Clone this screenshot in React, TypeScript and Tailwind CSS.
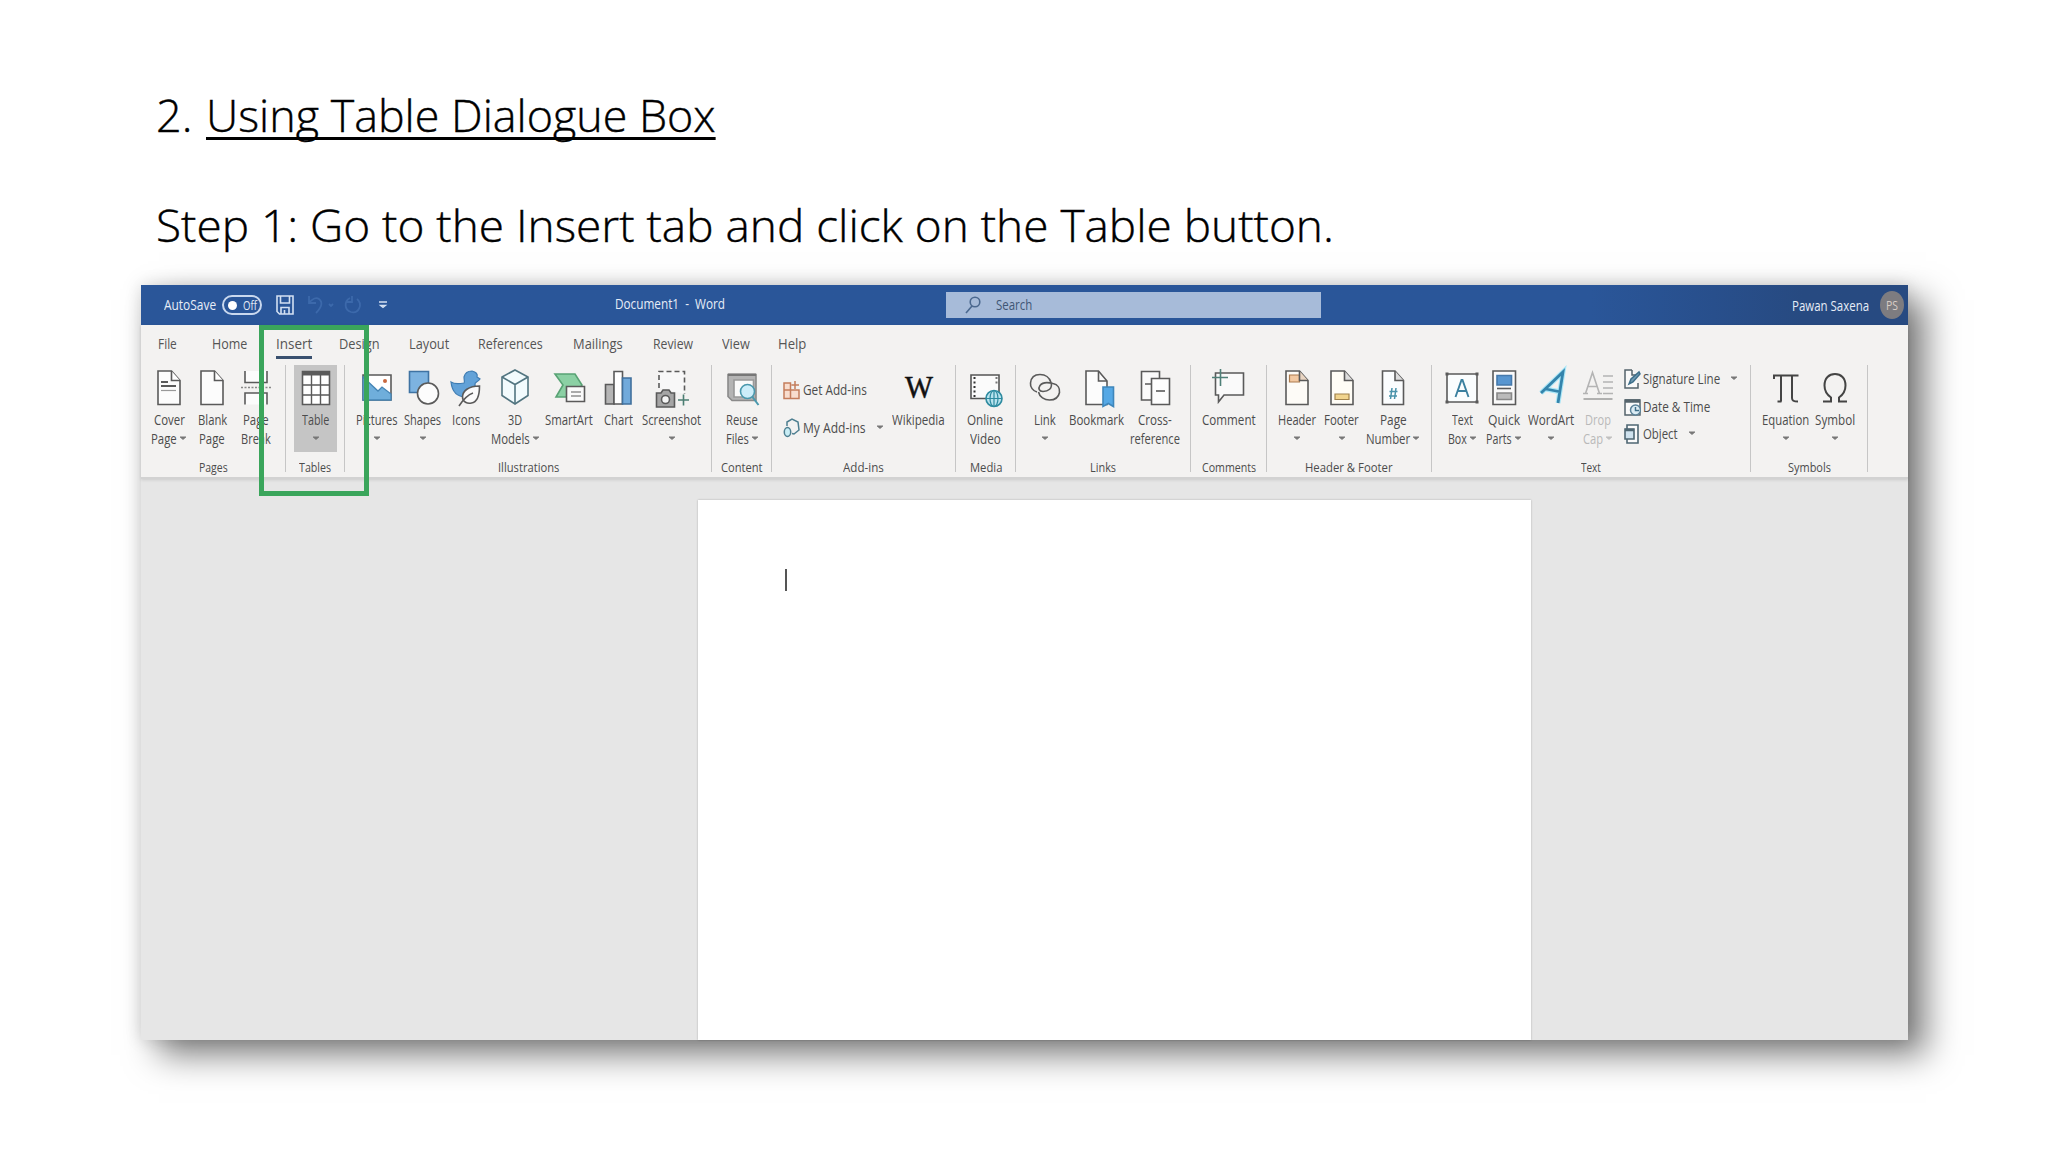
import { useLayoutEffect, useRef, useState, type ReactNode } from "react";
import clsx from "clsx";

// Squeezes one line of text horizontally so that it fills exactly `width` pixels
function FitText({ width, className, children }: { width: number; className?: string; children: string }) {
    const ref = useRef<HTMLSpanElement>(null);
    const [scale, setScale] = useState(1);

    useLayoutEffect(() => {
        if (ref.current) setScale(width / ref.current.offsetWidth);
    }, [width, children]);

    return (
        <span className="block shrink-0" style={{ width }}>
            <span
                ref={ref}
                className={clsx("block w-max origin-left whitespace-pre", className)}
                style={{ transform: `scaleX(${scale})` }}
            >
                {children}
            </span>
        </span>
    );
}

function Chevron({ className }: { className?: string }) {
    return (
        <svg viewBox="0 0 8 5" className={clsx("h-[5px] w-2 shrink-0", className)} fill="none">
            <path d="M1.200 1L4 3.400 6.800 1z" fill="#777" stroke="#777" strokeWidth="1" />
        </svg>
    );
}

const ink = "#5a5a5a";

function Icon({ children }: { children: ReactNode }) {
    return (
        <svg
            viewBox="0 0 34 40"
            className="mt-[3px] h-10 w-[34px] shrink-0 overflow-visible"
            fill="none"
            stroke={ink}
            strokeWidth="1.6"
        >
            {children}
        </svg>
    );
}

const SheetPath = () => (
    <>
        <path d="M6 3h13.5l8.500 9.500V36.500H6z" fill="#fcfcfc" />
        <path d="M19.500 3v9.500h8.500" fill="#fff" />
    </>
);

const icons: Record<string, ReactNode> = {
    cover: (
        <Icon>
            <SheetPath />
            <path d="M9 14h7M9 18h15" strokeWidth="2" />
            <path d="M9 22.500h15" stroke="#999" strokeWidth="1.200" />
        </Icon>
    ),
    blank: (
        <Icon>
            <SheetPath />
        </Icon>
    ),
    pageBreak: (
        <Icon>
            <path d="M6 3v11.500h22V3M6 36.500V25h22v11.500" fill="#fcfcfc" />
            <path d="M2 19.500h31" stroke="#888" strokeDasharray="2 1.500" />
        </Icon>
    ),
    table: (
        <Icon>
            <path d="M3.500 3.500h27v33h-27z" fill="#fff" />
            <path d="M3.500 5.500h27" strokeWidth="4" />
            <path d="M3.500 17h27M3.500 27h27M12.500 7v29.500M21.500 7v29.500" strokeWidth="1.400" />
        </Icon>
    ),
    pictures: (
        <Icon>
            <path d="M3 7h28v25H3z" fill="#fff" />
            <path d="M3 9l15 14 4-4 9 7v6H3z" fill="#6faedb" stroke="#4585b5" strokeWidth="1.300" />
            <circle cx="25" cy="13" r="2" fill="#c9683f" stroke="none" />
        </Icon>
    ),
    shapes: (
        <Icon>
            <path d="M3.500 3.500h19v21h-19z" fill="#7db3e0" stroke="#3f73a3" />
            <circle cx="22" cy="25.500" r="10.500" fill="#fcfcfc" />
        </Icon>
    ),
    icons: (
        <Icon>
            <path
                d="M2 14c3 2 8 2 13 1 1-1 0-3 0-6 1-4 4-6 8-6 4 1 6 3 5 6l3 2c-2 3-5 3-5 5 1 6-3 12-9 13C8 29 3 23 2 14z"
                fill="#62a2d8"
                stroke="#3f7db3"
                strokeWidth="1.200"
            />
            <path d="M30.500 18c-11 0-17 5-17 11 0 5 5 7 9 6 6-1 8-8 8-17z" fill="#fbfbfb" />
            <path d="M10 38c4-6 8-11 14-13" />
        </Icon>
    ),
    cube: (
        <Icon>
            <path d="M17 2l13 7v18.500L17 36 4 27.500V9z" fill="#f2fbfd" stroke="#527580" />
            <path d="M4 9l13 7.500L30 9M17 16.500V36" stroke="#527580" />
        </Icon>
    ),
    smartArt: (
        <Icon>
            <path d="M3 6h20l7 11-7 12H4l7-12z" fill="#8bd0a4" stroke="#58a274" />
            <path d="M14.500 18.500h18v15h-18z" fill="#fafafa" />
            <path d="M19 24h10M19 28h10" strokeWidth="1.200" />
        </Icon>
    ),
    chart: (
        <Icon>
            <path d="M4.500 16.500h8.500v19.500H4.500z" fill="#b5b5b5" />
            <path d="M13 3.500h8.500V36H13z" fill="#fff" />
            <path d="M21.500 10h8.500v26h-8.500z" fill="#71aadb" stroke="#40709d" />
        </Icon>
    ),
    screenshot: (
        <Icon>
            <path d="M4 20V3.500h25.500V26" strokeDasharray="5 3" fill="#f8f8f8" />
            <path d="M1.500 25h4.500l2-3h6l2 3h3.500v14h-18z" fill="#a5a5a5" />
            <circle cx="10.500" cy="31.500" r="4" fill="#f4f4f4" />
            <path d="M23 32h11M28.500 26.500v11" stroke="#4b7d72" />
        </Icon>
    ),
    reuse: (
        <Icon>
            <path d="M3 6.500h28v26H7l-4-4z" fill="#b4b4b4" stroke="#8a8a8a" />
            <path d="M3 5.500h28v2.500H3z" fill="#777" stroke="none" />
            <path d="M9 12h19.500v17H9z" fill="#fafafa" stroke="#999" />
            <circle cx="22.500" cy="23.500" r="7" fill="#cdeefa" stroke="#4a98ad" />
            <path d="M27.500 29l6 8" stroke="#4a98ad" strokeWidth="2" />
        </Icon>
    ),
    wikipedia: (
        <Icon>
            <text
                x="3"
                y="30"
                textLength="28"
                lengthAdjust="spacingAndGlyphs"
                fill="#111"
                stroke="#111"
                strokeWidth="0.500"
                fontFamily="Liberation Serif, serif"
                fontSize="32"
            >
                W
            </text>
        </Icon>
    ),
    video: (
        <Icon>
            <path d="M3 7h28v23.500H3z" fill="#fbfbfb" stroke="#555" />
            <path d="M6.500 9v20" stroke="#333" strokeWidth="2" strokeDasharray="2 2.500" />
            <path d="M28.500 9v8" stroke="#777" strokeWidth="2" strokeDasharray="2 2.500" />
            <circle cx="26" cy="30.500" r="8" fill="#b9e3ee" stroke="#2e8ba0" />
            <path d="M18 30.500h16M26 22.500v16" stroke="#2e8ba0" strokeWidth="1.200" />
            <ellipse cx="26" cy="30.500" rx="4" ry="8" stroke="#2e8ba0" strokeWidth="1.200" />
        </Icon>
    ),
    link: (
        <Icon>
            <path d="M9 24c-4-1-7-5-6.500-9C3 10 6 6.500 12 6.500c6 0 9 2 11 8s-3 9-8 9c-4 0-5-3-3-6 3-4 9-3 13-2 5 1 7 5 6.500 9-1 5-4 7.500-10 7.500-5 0-10-3-11-8" />
        </Icon>
    ),
    bookmark: (
        <Icon>
            <path d="M6 3h12.500l8.500 10V36.500H6z" fill="#fcfcfc" />
            <path d="M18.500 3v10h8.500" />
            <path d="M23 19h10.500v19.500l-5.200-3-5.300 3z" fill="#55a8e5" stroke="#3e86bb" />
        </Icon>
    ),
    crossRef: (
        <Icon>
            <path d="M3.500 3.500h18v28.500h-18zM7 16h6" fill="#fafafa" />
            <path d="M13.500 10.500h18v26h-18z" fill="#fdfdfd" />
            <path d="M18 23h9" />
        </Icon>
    ),
    comment: (
        <Icon>
            <path d="M3.500 5h28v22H12l-5.500 7v-7h-3z" fill="#fafafa" />
            <path d="M0 9.500h16M8.500 1v17" stroke="#4f8078" />
        </Icon>
    ),
    header: (
        <Icon>
            <path d="M6 3h13.500l8.500 9.500V36.500H6z" fill="#fdfbf7" />
            <path d="M9.500 7h10v7h-10z" fill="#f3c9a2" stroke="#ab7b4e" strokeWidth="1.200" />
            <path d="M19.500 3v9.500h8.500" fill="#e9d5c2" />
        </Icon>
    ),
    footer: (
        <Icon>
            <path d="M6 3h13.500l8.500 9.500V36.500H6z" fill="#fffdf6" />
            <path d="M19.500 3v9.500h8.500" fill="#ddd" />
            <path d="M10 26h14v5.500H10z" fill="#f1d48d" stroke="#a1824a" strokeWidth="1.200" />
        </Icon>
    ),
    pageNumber: (
        <Icon>
            <path d="M6.500 3h12.500l8.500 9.500V36.500h-21z" fill="#fbfdfe" />
            <path d="M19 3v9.500h8.500" fill="#ddd" />
            <path d="M16 20l-1.500 11M20 20l-1.500 11M13.500 23.500h8M13 28h8" stroke="#4a93ab" strokeWidth="1.500" />
        </Icon>
    ),
    textBox: (
        <Icon>
            <path d="M2 6h30v28H2z" fill="#fafdfe" />
            <path d="M10.500 29l6-17h1l6 17M12.500 23h9" stroke="#3b809f" strokeWidth="1.900" />
            <path d="M.5 4.500h3v3h-3zM30.500 4.500h3v3h-3zM.5 32.500h3v3h-3zM30.500 32.500h3v3h-3z" fill={ink} stroke="none" />
        </Icon>
    ),
    quickParts: (
        <Icon>
            <path d="M6 3h22.500v33.500H6z" fill="#fafafa" />
            <path d="M10 7.500h14.500v9.500H10z" fill="#5896d0" stroke="#4579ab" />
            <path d="M10 20.500h14" />
            <path d="M10 25h14.500v6.500H10z" fill="#bbb" stroke="#888" />
        </Icon>
    ),
    wordArt: (
        <Icon>
            <path d="M7 25L29 4l-5 31M12 21l15 3" stroke="#a9e6f7" strokeWidth="5" />
            <path d="M7 25L29 4l-5 31M12 21l15 3" stroke="#3484ac" strokeWidth="2.800" />
        </Icon>
    ),
    dropCap: (
        <Icon>
            <path d="M4.500 25.500l7-21 7 21M7 18.500h9M2 25.500h5M16 25.500h5M22 8h10M22 14h10M22 20h10M22 25.500h10" stroke="#b4b4b4" />
            <path d="M2.500 31h29" stroke="#a0a0a0" />
        </Icon>
    ),
    pi: (
        <Icon>
            <path d="M5 11V7.500h24.500M12 8v25.500M8.500 33.500h4M23 8v22c0 3 2 3.500 6 3.500" stroke="#444" strokeWidth="2" />
        </Icon>
    ),
    omega: (
        <Icon>
            <path d="M5 33.500h8v-4C8 26 6.500 22 6.500 17.500 6.500 10 11 6 17 6s10.500 4 10.500 11.500c0 4.500-1.500 8.500-6.500 12v4h8" stroke="#444" strokeWidth="2" />
        </Icon>
    ),
};

interface Line {
    text: string;
    width: number;
    arrow?: boolean;
}

interface RibbonButtonProps {
    icon: string;
    lines: Line[];
    className: string;
    arrow?: boolean;
    disabled?: boolean;
}

function RibbonButton({ icon, lines, className, arrow, disabled }: RibbonButtonProps) {
    return (
        <div
            className={clsx(
                "flex shrink-0 flex-col items-center",
                disabled ? "text-[#b9b9b9]" : "text-[#4c4c4c]",
                className
            )}
        >
            {icons[icon]}
            <div className="mt-[2px] flex flex-col items-center">
                {lines.map((line) => (
                    <div key={line.text} className="flex h-[19px] items-center gap-[2px]">
                        <FitText width={line.width} className="text-sm leading-[19px]">
                            {line.text}
                        </FitText>
                        {line.arrow && <Chevron className={disabled ? "opacity-40" : ""} />}
                    </div>
                ))}
                {arrow && <Chevron className="mt-[7px]" />}
            </div>
        </div>
    );
}

function Group({ label, labelWidth, className, children }: { label: string; labelWidth: number; className: string; children: ReactNode }) {
    return (
        <div className={clsx("flex h-[107px] shrink-0 flex-col items-center border-r border-[#c6c6c6]", className)}>
            <div className="flex h-[94px] w-full shrink-0 items-start">{children}</div>
            <FitText width={labelWidth} className="text-[13px] leading-[17px] text-[#4c4c4c]">
                {label}
            </FitText>
        </div>
    );
}

const tabs = [
    { name: "File", width: 19, className: "ml-[17px]" },
    { name: "Home", width: 35, className: "ml-[35px]" },
    { name: "Insert", width: 36, className: "ml-[29px]" },
    { name: "Design", width: 41, className: "ml-[27px]" },
    { name: "Layout", width: 40, className: "ml-[29px]" },
    { name: "References", width: 65, className: "ml-[29px]" },
    { name: "Mailings", width: 50, className: "ml-[30px]" },
    { name: "Review", width: 40, className: "ml-[30px]" },
    { name: "View", width: 28, className: "ml-[29px]" },
    { name: "Help", width: 28, className: "ml-7" },
];

function TitleBar() {
    return (
        <div className="flex h-10 items-center bg-linear-to-r from-[#2a5699] from-82% via-[#284f8c] via-89% to-[#274a81] to-94% pl-[23px] text-[#e6edf7]">
            <FitText width={52} className="text-sm leading-5">AutoSave</FitText>
            <div className="ml-[6px] flex h-5 w-10 items-center gap-[6px] rounded-full border-2 border-[#c9d8ee] pl-1">
                <div className="size-[9px] rounded-full bg-white" />
                <FitText width={14} className="text-[13px] leading-4">Off</FitText>
            </div>
            <svg viewBox="0 0 18 20" className="ml-[14px] h-5 w-[18px]" fill="none" stroke="#d3e0f2" strokeWidth="1.600">
                <path d="M1 1h16v18H3.500L1 16.500zM4.500 1v7h9V1M5 19v-6.500h8V19M8.500 15v4" />
            </svg>
            <svg viewBox="0 0 60 22" className="ml-3 h-[22px] w-[60px]" fill="none" stroke="#3c69ab" strokeWidth="1.800">
                <path d="M3 2v7h7M3 9c3-4 7-6 10-4 4 3 3 8-3 14M23 10l2 2 2-2M44 4c-6 3-6 12 1 14 8 2 12-8 6-13M46 2v6h-6" />
            </svg>
            <svg viewBox="0 0 10 8" className="ml-3 h-2 w-[10px]" fill="none" stroke="#d3e0f2" strokeWidth="1.300">
                <path d="M1 1h8M2.500 4.500L5 6.500l2.500-2z" />
            </svg>
            <div className="mb-[2px] ml-[227px]">
                <FitText width={110} className="text-sm leading-5">Document1  -  Word</FitText>
            </div>
            <div className="ml-[221px] flex h-[26px] w-[375px] items-center gap-[15px] bg-[#a7bbd9] pl-[19px] text-[#3f5675]">
                <svg viewBox="0 0 16 18" className="h-[18px] w-4" fill="none" stroke="#4b688f" strokeWidth="1.600">
                    <circle cx="10" cy="6" r="4.800" />
                    <path d="M7 10l-6 7" />
                </svg>
                <FitText width={36} className="text-sm leading-5">Search</FitText>
            </div>
            <div className="mt-[2px] ml-[471px]">
                <FitText width={77} className="text-sm leading-5">Pawan Saxena</FitText>
            </div>
            <div className="ml-[11px] flex h-7 w-6 items-center justify-center rounded-[50%] bg-[#7d7c80] text-[#d8ccc5]">
                <FitText width={12} className="text-[13px] leading-5">PS</FitText>
            </div>
        </div>
    );
}

function AddInsColumn() {
    return (
        <div className="ml-[11px] flex w-[101px] flex-col pt-[15px] text-[#4c4c4c]">
            <div className="flex h-[19px] items-center">
                <svg viewBox="0 0 17 20" className="mr-[3px] h-5 w-[17px]" fill="#f8ddce" stroke="#c47d5c" strokeWidth="1.500">
                    <path d="M1 3h6.500v7H1zM1 10h6.500v8.500H1zM7.500 10H16v8.500H7.500zM12 1v8M8.500 5H16" />
                </svg>
                <FitText width={64} className="text-sm leading-[19px]">Get Add-ins</FitText>
            </div>
            <div className="mt-[19px] flex h-[19px] items-center">
                <svg viewBox="0 0 17 20" className="mr-[3px] h-5 w-[17px]" fill="none" stroke="#4e7f90" strokeWidth="1.500">
                    <path d="M4 8V4l5-3 6 3 1 8-5 4-2-.5" />
                    <ellipse cx="4.500" cy="14" rx="3.200" ry="4.500" fill="#c8edf5" />
                </svg>
                <FitText width={63} className="text-sm leading-[19px]">My Add-ins</FitText>
                <Chevron className="ml-[10px]" />
            </div>
        </div>
    );
}

function TextColumn() {
    return (
        <div className="ml-[10px] flex flex-col gap-[9px] pt-1 text-[#4c4c4c]">
            <div className="flex h-[19px] items-center">
                <svg viewBox="0 0 17 20" className="mr-[2px] h-5 w-[17px]" fill="#fafafa" stroke="#55646c" strokeWidth="1.500">
                    <path d="M8 1H1v18h13v-5M8 1v5h4" />
                    <path d="M5 15l2-5 8-7 1 2-7 8z" fill="#6f9ab3" stroke="#3e6f8a" />
                </svg>
                <FitText width={77} className="text-sm leading-[19px]">Signature Line</FitText>
                <Chevron className="ml-[10px]" />
            </div>
            <div className="flex h-[19px] items-center">
                <svg viewBox="0 0 17 20" className="mr-[2px] h-5 w-[17px]" fill="#fafafa" stroke="#55646c" strokeWidth="1.500">
                    <path d="M1 3h15v15H1z" />
                    <path d="M1 4h15" strokeWidth="3.500" />
                    <circle cx="11.500" cy="13" r="5" fill="#dcecf4" stroke="#5c8298" />
                    <path d="M11.500 10v3.500H15" stroke="#3e6f8a" />
                </svg>
                <FitText width={67} className="text-sm leading-[19px]">Date & Time</FitText>
            </div>
            <div className="-mt-px flex h-[19px] items-center">
                <svg viewBox="0 0 17 20" className="mr-[2px] h-5 w-[17px]" fill="#fafafa" stroke="#4f6773" strokeWidth="1.600">
                    <path d="M3 5V1h11v18H3v-4" />
                    <path d="M1 5h9v10H1z" fill="#cfe2ee" />
                    <path d="M1 6h9" strokeWidth="2.500" />
                </svg>
                <FitText width={35} className="text-sm leading-[19px]">Object</FitText>
                <Chevron className="ml-[10px]" />
            </div>
        </div>
    );
}

function Ribbon() {
    return (
        <div className="flex h-[112px] items-start">
            <Group label="Pages" labelWidth={29} className="w-[145px]">
                <RibbonButton icon="cover" className="ml-[9px] w-[38px]" lines={[{ text: "Cover", width: 31 }, { text: "Page", width: 26, arrow: true }]} />
                <RibbonButton icon="blank" className="ml-[9px] w-[30px]" lines={[{ text: "Blank", width: 29 }, { text: "Page", width: 26 }]} />
                <RibbonButton icon="pageBreak" className="ml-[14px] w-[30px]" lines={[{ text: "Page", width: 26 }, { text: "Break", width: 30 }]} />
            </Group>
            <Group label="Tables" labelWidth={32} className="w-[59px]">
                <RibbonButton icon="table" className="ml-2 h-[87px] w-[43px] bg-[#c5c5c5]" arrow lines={[{ text: "Table", width: 27 }]} />
            </Group>
            <Group label="Illustrations" labelWidth={61} className="w-[367px]">
                <RibbonButton icon="pictures" className="ml-[11px] w-[42px]" arrow lines={[{ text: "Pictures", width: 42 }]} />
                <RibbonButton icon="shapes" className="ml-[6px] w-[37px]" arrow lines={[{ text: "Shapes", width: 37 }]} />
                <RibbonButton icon="icons" className="ml-[10px] w-[29px]" lines={[{ text: "Icons", width: 28 }]} />
                <RibbonButton icon="cube" className="ml-[10px] w-[50px]" lines={[{ text: "3D", width: 14 }, { text: "Models", width: 39, arrow: true }]} />
                <RibbonButton icon="smartArt" className="ml-[5px] w-12" lines={[{ text: "SmartArt", width: 48 }]} />
                <RibbonButton icon="chart" className="ml-[10px] w-[30px]" lines={[{ text: "Chart", width: 29 }]} />
                <RibbonButton icon="screenshot" className="ml-[9px] w-[59px]" arrow lines={[{ text: "Screenshot", width: 59 }]} />
            </Group>
            <Group label="Content" labelWidth={42} className="w-[60px]">
                <RibbonButton icon="reuse" className="ml-[13px] w-[34px]" lines={[{ text: "Reuse", width: 32 }, { text: "Files", width: 23, arrow: true }]} />
            </Group>
            <Group label="Add-ins" labelWidth={41} className="w-[184px]">
                <AddInsColumn />
                <RibbonButton icon="wikipedia" className="ml-2 w-[53px]" lines={[{ text: "Wikipedia", width: 53 }]} />
            </Group>
            <Group label="Media" labelWidth={32} className="w-[60px]">
                <RibbonButton icon="video" className="ml-[11px] w-9" lines={[{ text: "Online", width: 36 }, { text: "Video", width: 31 }]} />
            </Group>
            <Group label="Links" labelWidth={26} className="w-[175px]">
                <RibbonButton icon="link" className="ml-[14px] w-[30px]" arrow lines={[{ text: "Link", width: 22 }]} />
                <RibbonButton icon="bookmark" className="ml-[9px] w-[55px]" lines={[{ text: "Bookmark", width: 55 }]} />
                <RibbonButton icon="crossRef" className="ml-[6px] w-[50px]" lines={[{ text: "Cross-", width: 34 }, { text: "reference", width: 50 }]} />
            </Group>
            <Group label="Comments" labelWidth={54} className="w-[76px]">
                <RibbonButton icon="comment" className="ml-[11px] w-[54px]" lines={[{ text: "Comment", width: 54 }]} />
            </Group>
            <Group label="Header & Footer" labelWidth={88} className="w-[165px]">
                <RibbonButton icon="header" className="ml-[11px] w-[38px]" arrow lines={[{ text: "Header", width: 38 }]} />
                <RibbonButton icon="footer" className="ml-2 w-[35px]" arrow lines={[{ text: "Footer", width: 35 }]} />
                <RibbonButton icon="pageNumber" className="ml-[6px] w-14" lines={[{ text: "Page", width: 27 }, { text: "Number", width: 44, arrow: true }]} />
            </Group>
            <Group label="Text" labelWidth={20} className="w-[319px]">
                <RibbonButton icon="textBox" className="ml-[14px] w-8" lines={[{ text: "Text", width: 21 }, { text: "Box", width: 19, arrow: true }]} />
                <RibbonButton icon="quickParts" className="ml-[7px] w-[38px]" lines={[{ text: "Quick", width: 32 }, { text: "Parts", width: 26, arrow: true }]} />
                <RibbonButton icon="wordArt" className="ml-[5px] w-[46px]" arrow lines={[{ text: "WordArt", width: 46 }]} />
                <RibbonButton icon="dropCap" className="ml-2 w-8" disabled lines={[{ text: "Drop", width: 26 }, { text: "Cap", width: 20, arrow: true }]} />
                <TextColumn />
            </Group>
            <Group label="Symbols" labelWidth={43} className="w-[117px]">
                <RibbonButton icon="pi" className="ml-[11px] w-[47px]" arrow lines={[{ text: "Equation", width: 47 }]} />
                <RibbonButton icon="omega" className="ml-[6px] w-10" arrow lines={[{ text: "Symbol", width: 40 }]} />
            </Group>
        </div>
    );
}

export default function App() {
    return (
        <div className="h-[1152px] w-[2048px] overflow-hidden bg-white pt-[85px] font-['Open_Sans',sans-serif]">
            <div className="flex flex-col gap-[50px] pl-[156px] text-[45px] leading-[60px] font-light text-black [-webkit-text-stroke:0.4px_black]">
                <h1 className="flex gap-[14px]">
                    <FitText width={36}>2.</FitText>
                    <FitText width={510} className="underline decoration-[3px] underline-offset-[5px] [text-decoration-skip-ink:none]">
                        Using Table Dialogue Box
                    </FitText>
                </h1>
                <p>
                    <FitText width={1178}>Step 1: Go to the Insert tab and click on the Table button.</FitText>
                </p>
            </div>

            <div className="relative mt-[30px] ml-[141px] flex h-[755px] w-[1767px] flex-col bg-[#e6e6e6] shadow-[18px_15px_32px_rgba(0,0,0,0.5),0_0_16px_rgba(0,0,0,0.14)]">
                <TitleBar />
                <div className="border-b-2 border-[#d2d2d2] bg-[#f3f2f1] shadow-[0_1px_3px_rgba(0,0,0,0.12)]">
                    <div className="flex h-10 items-start pt-2 text-[#555]">
                        {tabs.map((tab) => (
                            <div key={tab.name} className={tab.className}>
                                <FitText width={tab.width} className="text-[15px] leading-5">{tab.name}</FitText>
                                {tab.name === "Insert" && <div className="mt-[3px] h-[3px] bg-[#39506f]" />}
                            </div>
                        ))}
                    </div>
                    <Ribbon />
                </div>
                <div className="mt-[21px] ml-[557px] w-[833px] flex-1 bg-white pt-[69px] pl-[87px] shadow-[0_0_2px_rgba(0,0,0,0.25)]">
                    <div className="h-[22px] w-[2px] bg-[#555]" />
                </div>

                {/* Highlight frame round the Table button */}
                <div className="absolute top-10 left-[118px] h-[171px] w-[110px] border-5 border-[#3aa55b]" />
            </div>
        </div>
    );
}
